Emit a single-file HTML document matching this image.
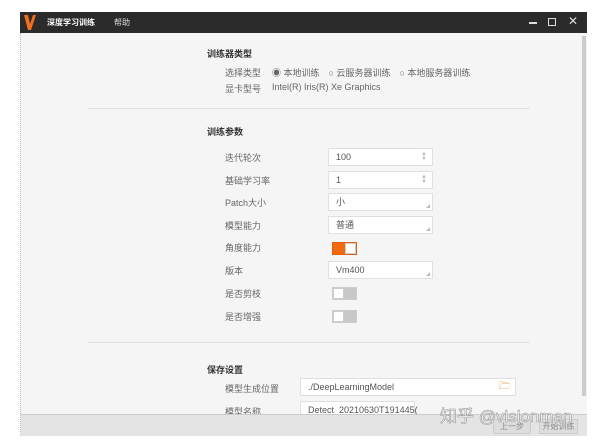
<!DOCTYPE html>
<html><head><meta charset="utf-8"><style>
*{margin:0;padding:0;box-sizing:border-box}
body{width:600px;height:440px;background:#fff;position:relative;overflow:hidden;font-family:"Liberation Sans","Noto Sans CJK SC",sans-serif;font-size:9px;color:#555}
.a{position:absolute}
#win{left:20px;top:12px;width:567px;height:424px;background:#f5f5f5;border-left:1px dotted #bbb}
#tb{left:20px;top:12px;width:567px;height:21px;background:#2b2b2b}
.t{position:absolute;white-space:nowrap}
.h{font-weight:bold;color:#333;font-size:9px}
.l{color:#666}
.in{position:absolute;background:#fff;border:1px solid #e0e0e0;height:18px;padding-left:7px;line-height:16px;color:#555;font-size:9px}
.rs:after{content:"";position:absolute;right:2px;bottom:2px;border-left:4px solid transparent;border-bottom:4px solid #bbb}
.sp{position:absolute;right:5px;top:3px;color:#bbb;font-size:6px;line-height:5px}
.tg{position:absolute;width:25px;height:13px;border:1px solid #ccc;background:#c8c8c8}
.tg i{position:absolute;top:0;width:11px;height:11px;background:#fff;border:1px solid #ccc}
.sep{position:absolute;left:88px;width:442px;height:1px;background:#e2e2e2}
.btn{position:absolute;top:419px;height:15px;background:#ddd;border:1px solid #ccc;color:#888;font-size:8px;text-align:center;line-height:13px}
</style></head><body>
<div id="win" class="a"></div>
<div id="tb" class="a"></div>
<svg class="a" style="left:23px;top:14px" width="14" height="17"><path d="M1 1 L5 1 L7 10 L10 1 L13 1 L8 16 L5 16 Z" fill="#f07020"/></svg>
<div class="t" style="left:47px;top:17px;color:#fff;font-weight:bold;font-size:8px">深度学习训练</div>
<div class="t" style="left:114px;top:17px;color:#ddd;font-size:8px">帮助</div>
<div class="a" style="left:529px;top:22px;width:8px;height:2px;background:#ddd"></div>
<div class="a" style="left:548px;top:18px;width:8px;height:8px;border:1.5px solid #ddd"></div>
<div class="t" style="left:568px;top:14px;color:#ddd;font-size:12px">✕</div>
<div class="a" style="left:582px;top:36px;width:4px;height:360px;background:#ccc"></div>

<div class="t h" style="left:207px;top:47px">训练器类型</div>
<div class="t l" style="left:225px;top:66px">选择类型</div>
<div class="t l" style="left:272px;top:66px">◉ 本地训练　○ 云服务器训练　○ 本地服务器训练</div>
<div class="t l" style="left:225px;top:82px">显卡型号</div>
<div class="t l" style="left:272px;top:82px">Intel(R) Iris(R) Xe Graphics</div>
<div class="sep" style="top:108px"></div>

<div class="t h" style="left:207px;top:125px">训练参数</div>
<div class="t l" style="left:225px;top:151px">迭代轮次</div>
<div class="in" style="left:328px;top:148px;width:105px">100<span class="sp">▲<br>▼</span></div>
<div class="t l" style="left:225px;top:174px">基础学习率</div>
<div class="in" style="left:328px;top:171px;width:105px">1<span class="sp">▲<br>▼</span></div>
<div class="t l" style="left:225px;top:196px">Patch大小</div>
<div class="in rs" style="left:328px;top:193px;width:105px">小</div>
<div class="t l" style="left:225px;top:219px">模型能力</div>
<div class="in rs" style="left:328px;top:216px;width:105px">普通</div>
<div class="t l" style="left:225px;top:241px">角度能力</div>
<div class="tg" style="left:332px;top:242px;background:#f26a10;border-color:#e06010"><i style="right:0"></i></div>
<div class="t l" style="left:225px;top:264px">版本</div>
<div class="in rs" style="left:328px;top:261px;width:105px">Vm400</div>
<div class="t l" style="left:225px;top:287px">是否剪枝</div>
<div class="tg" style="left:332px;top:287px"><i style="left:0"></i></div>
<div class="t l" style="left:225px;top:310px">是否增强</div>
<div class="tg" style="left:332px;top:310px"><i style="left:0"></i></div>
<div class="sep" style="top:342px"></div>

<div class="t h" style="left:207px;top:363px">保存设置</div>
<div class="t l" style="left:225px;top:382px">模型生成位置</div>
<div class="in" style="left:300px;top:378px;width:216px">./DeepLearningModel<span style="position:absolute;right:4px;top:0;color:#e8b070;font-size:10px">🗁</span></div>
<div class="t l" style="left:225px;top:405px">模型名称</div>
<div class="in" style="left:300px;top:401px;width:115px;height:14px;border-bottom:none">Detect_20210630T191445(</div>
<div class="a" style="left:21px;top:414px;width:566px;height:22px;background:#e4e4e4;border-top:1px solid #ccc"></div>
<div class="btn" style="left:493px;width:38px">上一步</div>
<div class="btn" style="left:539px;width:39px">开始训练</div>
<div class="t" style="left:440px;top:402px;font-size:17px;color:rgba(255,255,255,.85);-webkit-text-stroke:.6px #999">知乎 @visionman</div>
</body></html>
